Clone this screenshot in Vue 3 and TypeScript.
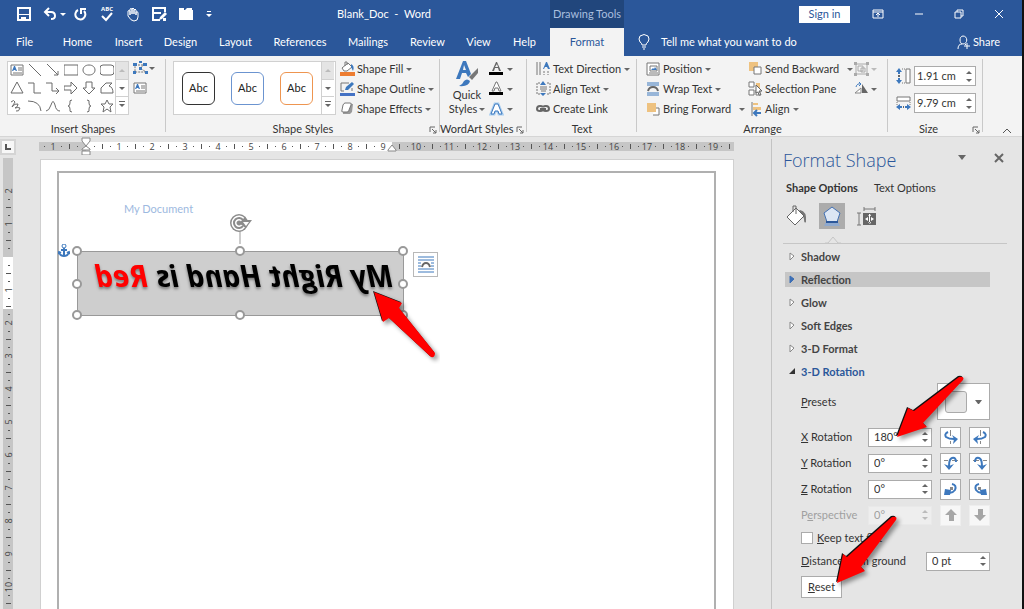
<script setup lang="ts">
import { ref } from 'vue'

const tabs = ['File', 'Home', 'Insert', 'Design', 'Layout', 'References', 'Mailings', 'Review', 'View', 'Help']

const shapeGlyphs: string[] = [
  'M1 1L13 13',
  'M1 1L12 12M12 8V12H8',
  'M0 2H14V12H0Z',
  'M7 2C15 2 15 12 7 12C-1 12 -1 2 7 2Z',
  'M3 2H11Q14 2 14 5V9Q14 12 11 12H3Q0 12 0 9V5Q0 2 3 2Z',
  'M7 1L13 12H1Z',
  'M0 2H6V12H13',
  'M0 2H6V10H13M10 7L13 10L10 13',
  'M0 5H7V1L13 7L7 13V9H0Z',
  'M4 1H10V7H13L7 13L1 7H4Z',
  'M1 12V7L6 2H12L9 5Q13 6 13 12Z',
  'M1 3Q4 0 5 3Q3 6 2 8Q5 4 8 5Q8 8 5 9Q8 8 10 9Q9 13 6 12',
  'M0 2Q12 2 13 12',
  'M0 12Q3 12 5 6Q7 -1 9 6Q10 12 14 12',
  'M8 1Q5 1 6 4Q6 7 4 7Q6 7 6 10Q5 13 8 13',
  'M5 1Q8 1 7 4Q7 7 9 7Q7 7 7 10Q8 13 5 13',
  'M7 1L9 5H13L10 8L11 13L7 10L3 13L4 8L1 5H5Z',
]

const swatches = ['black', 'blue', 'orange']

const horizontalMarks = Array.from({ length: 21 }, (_, i) => i - 1)
const verticalMarks = Array.from({ length: 13 }, (_, i) => i - 2)

const sections = ['Shadow', 'Reflection', 'Glow', 'Soft Edges', '3-D Format']

interface RotationIcon {
  label: string
  guide: string
  curve: string
  head: string
}

interface RotationRow {
  key: string
  accessKey: string
  before: string
  after: string
  value: string
  disabled: boolean
  icons: RotationIcon[]
}

const rotations = ref<RotationRow[]>([
  {
    key: 'x', accessKey: 'X', before: '', after: ' Rotation', value: '180°', disabled: false,
    icons: [
      { label: 'Left', guide: 'M6 0H7V6H6ZM6 11H7V14H6Z', curve: 'M4 2Q0 4 2 7Q5 9 10 9', head: 'M8 5L14 9L9 14L10 9Z' },
      { label: 'Right', guide: 'M7 0H8V6H7ZM7 11H8V14H7Z', curve: 'M10 2Q14 4 12 7Q9 9 4 9', head: 'M6 5L0 9L5 14L4 9Z' },
    ],
  },
  {
    key: 'y', accessKey: 'Y', before: '', after: ' Rotation', value: '0°', disabled: false,
    icons: [
      { label: 'Up', guide: 'M0 4H4V5H0ZM8 4H14V5H8Z', curve: 'M12 6Q12 1 8 2Q5 3 5 10', head: 'M0 8L5 14L10 8L5 10Z' },
      { label: 'Down', guide: 'M10 4H14V5H10ZM0 4H6V5H0Z', curve: 'M2 6Q2 1 6 2Q9 3 9 10', head: 'M4 8L9 14L14 8L9 10Z' },
    ],
  },
  {
    key: 'z', accessKey: 'Z', before: '', after: ' Rotation', value: '0°', disabled: false,
    icons: [
      { label: 'Counter-clockwise', guide: 'M6 5H9V8H6Z', curve: 'M8 2Q13 3 11 8Q8 12 3 10', head: 'M1 7L7 8L6 13L0 13Z' },
      { label: 'Clockwise', guide: 'M5 5H8V8H5Z', curve: 'M6 2Q1 3 3 8Q6 12 11 10', head: 'M13 7L7 8L8 13L14 13Z' },
    ],
  },
  {
    key: 'p', accessKey: 'e', before: 'P', after: 'rspective', value: '0°', disabled: true,
    icons: [
      { label: 'Narrow', guide: 'M7 1L13 7H10V13H5V7H1Z', curve: '', head: '' },
      { label: 'Widen', guide: 'M7 13L13 7H10V1H5V7H1Z', curve: '', head: '' },
    ],
  },
])

const height = ref('1.91 cm')
const width = ref('9.79 cm')
const distance = ref('0 pt')
const keepFlat = ref(false)
</script>

<template>
  <div class="window">
    <header class="titlebar">
      <div class="quick">
        <button aria-label="Save"><svg width="14" height="14" viewBox="0 0 14 14"><path d="M1 1H13V13H1Z" fill="none" stroke="#fff" stroke-width="2" /><path d="M2 7H12V8H2ZM4 10H9V14H4Z" fill="#fff" /></svg></button>
        <button aria-label="Undo" class="undo"><svg width="14" height="14" viewBox="0 0 14 14"><path d="M6 1L2 5L6 9M2 5H8Q12 5 12 9Q12 12 8 12" fill="none" stroke="#fff" stroke-width="2" /></svg><i class="caret light" /></button>
        <button aria-label="Redo"><svg width="14" height="14" viewBox="0 0 14 14"><path d="M4 3A5 5 0 1 0 10 4M7 7V2H12" fill="none" stroke="#fff" stroke-width="2" /></svg></button>
        <button aria-label="Spelling"><svg width="14" height="16" viewBox="0 0 14 16"><text x="7" y="5" text-anchor="middle" class="abc">ABC</text><path d="M2 10L6 14L12 7" fill="none" stroke="#fff" stroke-width="2" /></svg></button>
        <button aria-label="Touch mode"><svg width="14" height="15" viewBox="0 0 14 15"><path d="M2 9V4Q3 3 4 4V8V2Q5 1 6 2V7V2Q7 0 8 2V7V3Q9 1 10 3V8V5Q12 4 12 6V10Q12 14 8 14Q5 14 2 9" fill="none" stroke="#fff" /></svg></button>
        <button aria-label="Save as"><svg width="15" height="14" viewBox="0 0 15 14"><path d="M8 13H1V1H13V5M2 6H9" fill="none" stroke="#fff" stroke-width="2" /><path d="M7 13L8 10L13 5L15 7L10 12ZM11 11H14V14H11Z" fill="#fff" /></svg></button>
        <button aria-label="Open"><svg width="15" height="14" viewBox="0 0 15 14"><path d="M0 1H5V3H6L8 1H13V3H14V13H0Z" fill="#fff" /></svg></button>
        <button aria-label="Customize toolbar"><svg width="6" height="8" viewBox="0 0 6 8"><path d="M1 1H5V2H1ZM0 4H6L3 7Z" fill="#fff" /></svg></button>
      </div>
      <h1>Blank_Doc&nbsp; -&nbsp; Word</h1>
      <span class="context">Drawing Tools</span>
      <div class="window-actions">
        <button class="signin">Sign in</button>
        <button aria-label="Ribbon display options"><svg width="12" height="10" viewBox="0 0 12 10"><path d="M1 1H11V9H1ZM1 3H11M6 8V4M4 6L6 4L8 6" fill="none" stroke="#fff" /></svg></button>
        <button aria-label="Minimize"><svg width="10" height="10" viewBox="0 0 10 10"><path d="M1 5H9" stroke="#fff" /></svg></button>
        <button aria-label="Restore"><svg width="10" height="10" viewBox="0 0 10 10"><path d="M1 3H7V9H1ZM3 3V1H9V7H7" fill="none" stroke="#fff" /></svg></button>
        <button aria-label="Close"><svg width="10" height="10" viewBox="0 0 10 10"><path d="M1 1L9 9M9 1L1 9" stroke="#fff" /></svg></button>
      </div>
    </header>

    <nav class="tabs">
      <button v-for="tab in tabs" :key="tab">{{ tab }}</button>
      <button class="active">Format</button>
      <button class="tell"><svg width="12" height="16" viewBox="0 0 12 16"><path d="M4 11Q4 9 2 8Q0 5 2 2Q6 -1 10 2Q12 5 10 8Q8 9 8 11ZM4 13H8M5 15H7" fill="none" stroke="#fff" /></svg>Tell me what you want to do</button>
      <button class="share"><svg width="14" height="14" viewBox="0 0 14 14"><path d="M6 1C11 1 11 9 6 9C2 9 2 1 6 1ZM1 14Q1 9 5 9M8 9L9 10M10 8V14M7 11H13" fill="none" stroke="#fff" /></svg>Share</button>
    </nav>

    <section class="ribbon" aria-label="Format">
      <div class="group insert">
        <div class="body">
          <div class="gallery">
            <div class="shapes">
              <button aria-label="Text box"><svg width="14" height="14" viewBox="0 0 14 14"><path d="M1 2H13V12H1ZM8 5H12M8 7H12M3 10H12" fill="#fff" stroke="#777" /><path d="M2 8L4 3H5L7 8H6L5 7H4L3 8Z" fill="#3d78bd" /></svg></button>
              <button v-for="(glyph, i) in shapeGlyphs" :key="i" :aria-label="`Shape ${i + 1}`"><svg width="14" height="14" viewBox="0 0 14 14"><path :d="glyph" fill="none" stroke="#6b6b6b" /></svg></button>
            </div>
            <div class="scroller"><button class="off" aria-label="Previous"><i class="caret up" /></button><button aria-label="Next"><i class="caret" /></button><button aria-label="More"><i class="caret more" /></button></div>
          </div>
          <div class="edit-tools">
            <button aria-label="Edit shape"><svg width="16" height="14" viewBox="0 0 16 14"><path d="M2 4H11L7 7L13 11H2Z" fill="none" stroke="#777" stroke-dasharray="2 1" /><path d="M0 2H4V5H0ZM10 2H14V5H10ZM6 6H9V9H6ZM12 10H15V13H12ZM0 10H3V13H0ZM6 0H9V2H6Z" fill="#3d78bd" /></svg><i class="caret" /></button>
            <button aria-label="Draw text box"><svg width="14" height="12" viewBox="0 0 14 12"><path d="M1 1H13V11H1ZM8 4H12M8 6H12M3 9H12" fill="#fff" stroke="#777" /><path d="M2 7L4 2H5L7 7H6L5 6H4L3 7Z" fill="#3d78bd" /></svg></button>
          </div>
        </div>
        <h2>Insert Shapes</h2>
      </div>

      <div class="group styles">
        <div class="body">
          <div class="gallery swatches">
            <button v-for="s in swatches" :key="s" class="swatch" :class="s">Abc</button>
            <div class="scroller"><button class="off" aria-label="Previous"><i class="caret up" /></button><button aria-label="Next"><i class="caret" /></button><button aria-label="More"><i class="caret more" /></button></div>
          </div>
          <div class="rows">
            <button><svg width="15" height="16" viewBox="0 0 15 16"><path d="M2 7L8 2L12 6L7 10H4ZM5 5V1H7V4" fill="#fff" stroke="#777" /><path d="M11 3Q15 5 13 10Q12 8 11 6Z" fill="#3d78bd" /><path d="M0 11H15V15H0Z" fill="#ed7d31" /></svg>Shape Fill<i class="caret" /></button>
            <button><svg width="15" height="16" viewBox="0 0 15 16"><path d="M9 2H1V10H4M12 7V10" fill="none" stroke="#777" /><path d="M5 9L6 6L12 1L14 3L8 9Z" fill="#3d78bd" /><path d="M0 12H15V15H0Z" fill="#4472c4" /></svg>Shape Outline<i class="caret" /></button>
            <button><svg width="15" height="16" viewBox="0 0 15 16"><path d="M3 11L6 3H13L12 11L10 13H3Z" fill="#999" /><path d="M5 2H10Q12 2 11 4L9 9Q9 11 7 11H3Q1 11 2 9L3 4Q4 2 5 2Z" fill="#fff" stroke="#777" /></svg>Shape Effects<i class="caret" /></button>
          </div>
        </div>
        <h2>Shape Styles</h2>
        <button class="launcher" aria-label="Shape style settings"><svg width="8" height="8" viewBox="0 0 8 8"><path d="M1 6V1H6M3 3L7 7M7 4V7H4" fill="none" stroke="#666" /></svg></button>
      </div>

      <div class="group wordart">
        <div class="body">
          <button class="quick-styles">
            <svg width="26" height="28" viewBox="0 0 26 28"><path d="M2 19L9 1H12L17 14L14 17L12 13H8L6 19ZM9 10H12L10 5Z" fill="#3d78bd" fill-rule="evenodd" /><path d="M15 17L24 8V13L18 20Z" fill="#777" /><path d="M5 26Q9 24 10 21Q13 18 16 21Q15 27 5 26Z" fill="#3d78bd" /></svg>
            <span>Quick</span><span>Styles<i class="caret" /></span>
          </button>
          <div class="rows">
            <button aria-label="Text fill"><svg width="15" height="16" viewBox="0 0 15 16"><path d="M3 10L7 1H8L12 10H10L9 7H6L5 10ZM6 6H9L8 3Z" fill="#666" fill-rule="evenodd" /><path d="M0 11H14V14H0Z" fill="#000" /></svg><i class="caret" /></button>
            <button aria-label="Text outline"><svg width="15" height="16" viewBox="0 0 15 16"><path d="M3 10L7 1H8L12 10H10L9 7H6L5 10Z" fill="#fff" stroke="#777" /><path d="M0 11H14V14H0Z" fill="#000" /></svg><i class="caret" /></button>
            <button aria-label="Text effects"><svg width="15" height="16" viewBox="0 0 15 16"><path d="M2 13L6 3H9L13 13H10L9 10H6L5 13Z" fill="none" stroke="#a8cdf0" stroke-width="3" /><path d="M2 13L6 3H9L13 13H10L9 10H6L5 13Z" fill="#fff" stroke="#3d78bd" /></svg><i class="caret" /></button>
          </div>
        </div>
        <h2>WordArt Styles</h2>
        <button class="launcher" aria-label="WordArt settings"><svg width="8" height="8" viewBox="0 0 8 8"><path d="M1 6V1H6M3 3L7 7M7 4V7H4" fill="none" stroke="#666" /></svg></button>
      </div>

      <div class="group text">
        <div class="body">
          <div class="rows">
            <button><svg width="15" height="16" viewBox="0 0 15 16"><path d="M1 1V14M4 1V14" stroke="#777" /><path d="M8 10V14M12 10V14" stroke="#777" stroke-dasharray="2 1" /><path d="M7 8L10 1H11L14 8H12L11 6H9L8 8Z" fill="#3d78bd" /></svg>Text Direction<i class="caret" /></button>
            <button><svg width="15" height="16" viewBox="0 0 15 16"><path d="M4 2H1V13H4M11 2H14V13H11" fill="none" stroke="#777" stroke-dasharray="2 1" /><path d="M4 6H11M4 8H11M5 10H10" stroke="#777" /><path d="M7 0L10 4H4ZM7 15L10 12H4Z" fill="#3d78bd" /></svg>Align Text<i class="caret" /></button>
            <button><svg width="15" height="16" viewBox="0 0 15 16"><path d="M7 6Q6 5 4 5Q1 5 1 8Q1 10 4 10Q6 10 7 9M7 6Q8 5 10 5Q13 5 13 8Q13 10 10 10Q8 10 7 9M4 8H10" fill="none" stroke="#666" stroke-width="2" /></svg>Create Link</button>
          </div>
        </div>
        <h2>Text</h2>
      </div>

      <div class="group arrange">
        <div class="body">
          <div class="rows first">
            <button><svg width="15" height="16" viewBox="0 0 15 16"><path d="M1 2H13V14H1ZM4 5H11V10H4ZM3 12H12" fill="#fff" stroke="#777" /><path d="M5 9L7 7L8 8L9 6L11 9Z" fill="#3d78bd" /></svg>Position<i class="caret" /></button>
            <button><svg width="15" height="16" viewBox="0 0 15 16"><path d="M1 2H13M1 4H13M1 12H13M1 14H13" stroke="#3d78bd" /><path d="M2 10Q3 6 7 6Q11 6 12 10" fill="none" stroke="#666" stroke-width="2" /></svg>Wrap Text<i class="caret" /></button>
            <button><svg width="15" height="16" viewBox="0 0 15 16"><path d="M8 7H13V14H7" fill="#fff" stroke="#777" /><path d="M1 2H10V11H1Z" fill="#eec280" /></svg>Bring Forward<i class="caret wide" /></button>
          </div>
          <div class="rows second">
            <button><svg width="15" height="16" viewBox="0 0 15 16"><path d="M1 1H10V10H1Z" fill="#eec280" /><path d="M6 6H13V13H6Z" fill="#fff" stroke="#777" /></svg>Send Backward<i class="caret wide" /></button>
            <button><svg width="15" height="16" viewBox="0 0 15 16"><path d="M1 1H6V6H1ZM1 9H6V14H1ZM8 9H12V14H8Z" fill="#fff" stroke="#777" /><path d="M8 2H12V7H8Z" fill="#eec280" /><path d="M8 4L14 10H11L13 14L11 14L10 11L8 12Z" fill="#fff" stroke="#666" /></svg>Selection Pane</button>
            <button><svg width="15" height="16" viewBox="0 0 15 16"><path d="M4 1V15" stroke="#777" /><path d="M5 2H10V4H5ZM5 6H13V9H5Z" fill="#eec280" /><path d="M13 12H6M9 9L6 12L9 15" fill="none" stroke="#3d78bd" stroke-width="2" /></svg>Align<i class="caret" /></button>
          </div>
          <div class="rows third">
            <button disabled aria-label="Group"><svg width="15" height="16" viewBox="0 0 15 16"><path d="M2 3H13V13H2ZM4 5H9V10H4ZM7 7H11V11H7Z" fill="none" stroke="#aaa" /><path d="M0 1H3V4H0ZM12 1H15V4H12ZM0 12H3V15H0ZM12 12H15V15H12Z" fill="#aaa" /></svg><i class="caret pale" /></button>
            <button aria-label="Rotate"><svg width="15" height="16" viewBox="0 0 15 16"><path d="M8 3V12H14Z" fill="#666" /><path d="M7 7V12H1Z" fill="#fff" stroke="#888" /><path d="M2 6Q3 2 7 3M5 1L7 3L5 5" fill="none" stroke="#3d78bd" /></svg><i class="caret" /></button>
          </div>
        </div>
        <h2>Arrange</h2>
      </div>

      <div class="group size">
        <div class="body">
          <label><svg width="16" height="16" viewBox="0 0 16 16"><path d="M10 1H14V15H10Z" fill="#fff" stroke="#777" /><path d="M6 1H9M6 15H9" stroke="#777" stroke-dasharray="1 1" /><path d="M3 0L6 4H4V6H2V4H0ZM3 16L6 12H4V10H2V12H0Z" fill="#3d78bd" /><path d="M2 7H4V9H2Z" fill="#666" /></svg><span class="spin"><input v-model="height" aria-label="Shape height"><span><button aria-label="Increase height"><i class="caret up" /></button><button aria-label="Decrease height"><i class="caret" /></button></span></span></label>
          <label><svg width="16" height="16" viewBox="0 0 16 16"><path d="M1 2H14V6H1Z" fill="#fff" stroke="#777" /><path d="M1 7V10M14 7V10" stroke="#777" stroke-dasharray="1 1" /><path d="M0 12L4 9V11H6V13H4V15ZM15 12L11 9V11H9V13H11V15Z" fill="#3d78bd" /><path d="M7 11H8V13H7Z" fill="#666" /></svg><span class="spin"><input v-model="width" aria-label="Shape width"><span><button aria-label="Increase width"><i class="caret up" /></button><button aria-label="Decrease width"><i class="caret" /></button></span></span></label>
        </div>
        <h2>Size</h2>
        <button class="launcher" aria-label="Size settings"><svg width="8" height="8" viewBox="0 0 8 8"><path d="M1 6V1H6M3 3L7 7M7 4V7H4" fill="none" stroke="#666" /></svg></button>
      </div>
      <button class="collapse" aria-label="Collapse ribbon"><svg width="10" height="6" viewBox="0 0 10 6"><path d="M1 5L5 1L9 5" fill="none" stroke="#555" /></svg></button>
    </section>

    <main class="workspace">
      <div class="editor">
        <button class="tab-stop" aria-label="Tab stop"><svg width="6" height="6" viewBox="0 0 6 6"><path d="M1 0V5H6" fill="none" stroke="#555" stroke-width="2" /></svg></button>
        <div class="ruler-top">
          <svg width="100%" height="18">
            <rect y="5" width="100%" height="9" fill="#c6c6c6" />
            <rect x="47" y="5" width="306" height="9" fill="#fff" />
            <g v-for="n in horizontalMarks" :key="n" :transform="`translate(${47 + 33 * n} 0)`">
              <text v-if="n !== 0" y="13" text-anchor="middle" class="mark">{{ Math.abs(n) }}</text>
              <path v-if="n < 19" d="M8 9H9V10H8ZM16 7H17V12H16ZM24 9H25V10H24Z" fill="#555" />
            </g>
            <path d="M5 9H6V10H5ZM682 9H683V10H682ZM690 7H691V12H690Z" fill="#555" />
            <path d="M43 1H51V4L47 9L43 4ZM47 9L51 12V13H43V12ZM43 14H51V18H43ZM353 8L357 13V14H349V13Z" fill="#fff" stroke="#888" />
          </svg>
        </div>
        <div class="ruler-side">
          <svg width="16" height="460">
            <rect x="3" width="10" height="460" fill="#c6c6c6" />
            <rect x="3" y="99" width="10" height="52" fill="#fff" />
            <g v-for="n in verticalMarks" :key="n" :transform="`translate(0 ${99 + 33 * n})`">
              <text v-if="n !== 0" transform="translate(12 0) rotate(-90)" text-anchor="middle" class="mark">{{ Math.abs(n) }}</text>
              <path d="M8 8H10V9H8ZM6 16H11V17H6ZM8 24H10V25H8Z" fill="#555" />
            </g>
          </svg>
        </div>
        <article class="page">
          <div class="frame">
            <p class="heading">My Document</p>
            <svg class="anchor" width="12" height="14" viewBox="0 0 12 14"><path d="M6 4V12M3 6H9M1 8Q2 12 6 12Q10 12 11 8M0 10L1 8L3 9M12 10L11 8L9 9" fill="none" stroke="#3d78bd" stroke-width="2" /><circle cx="6" cy="2" r="2" fill="none" stroke="#3d78bd" /></svg>
            <div class="shape">
              <p>My Right Hand is <em>Red</em></p>
              <svg class="rotate" width="24" height="32" viewBox="0 0 24 32"><path d="M11 19V32" stroke="#999" /><circle cx="10" cy="11" r="9" fill="#8c8c8c" /><path d="M14 8A5 5 0 1 0 14 14" fill="none" stroke="#fff" stroke-width="5" /><path d="M14 8A5 5 0 1 0 14 14" fill="none" stroke="#8c8c8c" stroke-width="2" /><path d="M13 8L11 11L17 16L23 8H18L16 5Z" fill="#8c8c8c" /><path d="M14 10H20L17 14Z" fill="#fff" /></svg>
              <i v-for="h in ['nw', 'n', 'ne', 'w', 'e', 'sw', 's', 'se']" :key="h" class="handle" :class="h" />
            </div>
            <button class="layout-options" aria-label="Layout options"><svg width="18" height="18" viewBox="0 0 18 18"><path d="M1 1H17M1 4H17M1 7H4M14 7H17M1 10H4M14 10H17M1 13H17M1 16H17" stroke="#3d78bd" /><path d="M5 11Q6 7 9 7Q12 7 13 11" fill="none" stroke="#666" stroke-width="2" /></svg></button>
          </div>
        </article>
      </div>

      <aside class="pane">
        <header>
          <h2>Format Shape</h2>
          <button aria-label="Pane options"><svg width="8" height="5" viewBox="0 0 8 5"><path d="M0 0H8L4 5Z" fill="#666" /></svg></button>
          <button aria-label="Close pane"><svg width="10" height="10" viewBox="0 0 10 10"><path d="M1 1L9 9M9 1L1 9" stroke="#666" stroke-width="2" /></svg></button>
        </header>
        <div class="options"><button class="on">Shape Options</button><button>Text Options</button></div>
        <div class="modes">
          <button aria-label="Fill and line"><svg width="22" height="22" viewBox="0 0 22 22"><path d="M14 5Q21 6 20 17Q18 19 18 14Q17 9 12 7Z" fill="#777" /><path d="M1 12L10 3L18 11L9 20Z" fill="#fff" stroke="#666" /><path d="M7 7V1H10V9" fill="none" stroke="#666" /></svg></button>
          <button class="on" aria-label="Effects"><svg width="20" height="22" viewBox="0 0 20 22"><path d="M4 17H16L18 21H2Z" fill="#8ea9cf" /><path d="M10 2L18 8L15 17H5L2 8Z" fill="#dce6f4" stroke="#4472b4" stroke-width="1" /><path d="M4 17H16" stroke="#2b579a" stroke-width="2" /></svg></button>
          <button aria-label="Layout and properties"><svg width="20" height="20" viewBox="0 0 20 20"><path d="M6 7H19V19H6Z" fill="#666" /><path d="M7 1V5M18 1V5M7 3H18M0 7H4M0 19H4M2 7V19" fill="none" stroke="#777" /><path d="M8 13L11 11V15ZM17 13L14 11V15ZM12 8H13V18H12ZM11 10L13 8L14 10ZM11 16L13 18L14 16Z" fill="#fff" /></svg></button>
        </div>
        <svg class="notch" width="16" height="8" viewBox="0 0 16 8"><path d="M0 7H3L8 1L13 7H16" fill="#e5e5e5" stroke="#c6c6c6" /></svg>
        <ul>
          <li v-for="s in sections" :key="s"><button :class="{ hot: s === 'Reflection' }"><svg width="6" height="9" viewBox="0 0 6 9"><path d="M1 1L5 4L1 8Z" /></svg>{{ s }}</button></li>
          <li><button class="open"><svg width="6" height="9" viewBox="0 0 6 9"><path d="M6 1V7H0Z" /></svg>3-D Rotation</button></li>
        </ul>
        <form class="rotation" @submit.prevent>
          <div class="field presets"><span><u>P</u>resets</span><button class="preset" aria-label="Presets"><i class="tile" /><svg width="7" height="4" viewBox="0 0 7 4"><path d="M0 0H7L4 4H3Z" fill="#666" /></svg></button></div>
          <div v-for="r in rotations" :key="r.key" class="field" :class="{ disabled: r.disabled }">
            <label :for="`rot-${r.key}`">{{ r.before }}<u>{{ r.accessKey }}</u>{{ r.after }}</label>
            <span class="spin"><input :id="`rot-${r.key}`" v-model="r.value" :disabled="r.disabled"><span><button type="button" :disabled="r.disabled" aria-label="Increase"><i class="caret up" /></button><button type="button" :disabled="r.disabled" aria-label="Decrease"><i class="caret" /></button></span></span>
            <button v-for="icon in r.icons" :key="icon.label" type="button" class="square" :disabled="r.disabled" :aria-label="icon.label"><svg width="14" height="14" viewBox="0 0 14 14"><path :d="icon.guide" :fill="r.disabled ? '#a6a6a6' : '#888'" /><path v-if="icon.curve" :d="icon.curve" fill="none" stroke="#3d78bd" stroke-width="2" /><path v-if="icon.head" :d="icon.head" fill="#3d78bd" /></svg></button>
          </div>
          <label class="flat"><input v-model="keepFlat" type="checkbox"><span><u>K</u>eep text flat</span></label>
          <div class="field distance"><label for="distance"><u>D</u>istance from ground</label><span class="spin"><input id="distance" v-model="distance"><span><button type="button" aria-label="Increase"><i class="caret up" /></button><button type="button" aria-label="Decrease"><i class="caret" /></button></span></span></div>
          <button type="button" class="reset"><u>R</u>eset</button>
        </form>
        <svg class="pointers" width="140" height="240" viewBox="0 0 140 240"><g class="pointer"><path d="M65 66L76 37L82 40L127 6Q133 5 131 9L91 52L95 56Z" /><path d="M5 212L11 183L15 186L60 146Q66 145 64 149L29 196L33 200Z" /></g></svg>
      </aside>
      <svg class="callout" width="70" height="76" viewBox="0 0 70 76"><g class="pointer"><path d="M4 4L32 15L29 20L65 65Q65 70 61 69L19 30L13 34Z" /></g></svg>
    </main>
  </div>
</template>

<style>
html, body { margin: 0; background: #e5e5e5; }
</style>

<style scoped>
.window { height: 100vh; box-sizing: border-box; overflow: hidden; display: flex; flex-direction: column; border-right: 2px solid #111; background: #e5e5e5; color: #333; font: 11px/16px Lato, "Open Sans", sans-serif; }
.window * { box-sizing: border-box; }
button { padding: 0; border: 0; background: none; color: inherit; font: inherit; display: flex; align-items: center; justify-content: center; white-space: nowrap; }
input { font: inherit; color: inherit; border: 0; background: none; padding: 0; margin: 0; min-width: 0; }
h1, h2, p, ul { margin: 0; padding: 0; font: inherit; list-style: none; }
svg { display: block; flex: none; }
.caret { display: block; flex: none; width: 0; height: 0; border: 3px solid transparent; border-top: 3px solid #666; border-bottom: 0; margin-left: 3px; }
.caret.light { border-top-color: #fff; }
.caret.pale { border-top-color: #bbb; }
.caret.up { border-top: 0; border-bottom: 3px solid #666; }

.titlebar { flex: none; height: 28px; display: grid; grid-template-columns: 218px 332px 74px 1fr; align-items: center; background: #2b579a; color: #fff; }
.quick { display: flex; align-items: center; padding-left: 17px; gap: 12px; }
.quick .undo { margin-right: -4px; }
.abc { font: bold 6px "Open Sans", sans-serif; fill: #fff; }
.titlebar h1 { text-align: center; }
.context { height: 28px; line-height: 28px; text-align: center; background: #21467c; color: #a9bfdf; }
.window-actions { display: flex; align-items: center; justify-content: flex-end; padding-right: 18px; gap: 30px; }
.signin { width: 51px; height: 17px; margin-right: -8px; background: #fff; color: #2b579a; }

.tabs { flex: none; height: 28px; display: grid; grid-template-columns: 49px 57px 45px 59px 51px 78px 58px 61px 41px 51px 74px 1fr 65px; background: #2b579a; color: #fff; }
.tabs .active { background: #f3f3f3; color: #2b579a; }
.tabs .tell { justify-content: flex-start; padding-left: 14px; gap: 11px; }
.tabs .share { justify-content: flex-start; gap: 2px; }

.ribbon { flex: none; height: 81px; display: flex; background: #f3f3f3; border-bottom: 1px solid #d5d5d5; }
.group { position: relative; flex: none; display: flex; flex-direction: column; justify-content: space-between; padding-top: 3px; }
.group::after { content: ""; position: absolute; right: 0; top: 3px; bottom: 4px; width: 1px; background: #c9c9c9; }
.group h2 { text-align: center; line-height: 14px; white-space: nowrap; }
.body { display: flex; }
.insert { width: 166px; }
.styles { width: 274px; }
.wordart { width: 87px; }
.text { width: 110px; }
.arrange { width: 251px; }
.size { width: 95px; }
.insert .body { padding: 2px 0 0 7px; }
.gallery { display: flex; height: 54px; background: #fff; border: 1px solid #d0d0d0; }
.shapes { display: grid; grid-template-columns: repeat(6, 18px); grid-template-rows: repeat(3, 18px); width: 107px; align-content: center; }
.scroller { width: 13px; flex: none; display: flex; flex-direction: column; border-left: 1px solid #d0d0d0; }
.scroller button { flex: 1; width: 100%; border-bottom: 1px solid #d0d0d0; }
.scroller button:last-child { border-bottom: 0; }
.scroller .caret { margin: 0; }
.scroller .off { background: #e4e4e4; }
.scroller .off .caret { border-bottom-color: #bbb; }
.caret.more { position: relative; }
.caret.more::before { content: ""; position: absolute; left: -3px; top: -6px; width: 6px; height: 1px; background: #666; }
.edit-tools { display: flex; flex-direction: column; align-items: flex-start; gap: 7px; padding-left: 4px; }
.edit-tools .caret { margin-left: 0; }
.styles .body { padding-left: 7px; }
.swatches { width: 163px; margin-top: 2px; padding-left: 8px; gap: 16px; align-items: center; }
.swatches .scroller { height: 100%; margin-left: -8px; }
.swatch { width: 33px; height: 33px; flex: none; border: 1px solid #333; border-radius: 6px; background: #fff; color: #222; }
.swatch.blue { border-color: #6b94d0; }
.swatch.orange { border-color: #ee9550; }
.rows { display: flex; flex-direction: column; align-items: flex-start; padding-left: 4px; }
.rows button { height: 20px; }
.rows svg { margin-right: 2px; }
.launcher { position: absolute; right: 3px; bottom: 2px; width: 8px; height: 8px; }
.quick-styles { flex-direction: column; justify-content: flex-start; width: 36px; margin-left: 9px; padding-top: 1px; line-height: 14px; }
.quick-styles span { display: flex; align-items: center; }
.quick-styles .caret { margin-left: 2px; }
.wordart .rows .caret { margin-left: 1px; }
.wordart h2 { padding-right: 14px; }
.text .rows, .arrange .first { padding-left: 9px; }
.first { width: 111px; }
.rows.second { padding: 0; width: 106px; }
.rows.third { padding: 0; }
.third .caret { margin-left: 0; }
.rows .caret.wide { margin-left: 8px; }
.size .body { flex-direction: column; gap: 7px; padding: 7px 0 0 8px; }
.size label { display: flex; align-items: center; gap: 2px; }
.size h2 { padding-right: 14px; }
.spin { display: flex; align-items: stretch; background: #fff; border: 1px solid #ababab; }
.spin input { flex: 1; width: 10px; padding-left: 2px; }
.spin > span { display: flex; flex-direction: column; width: 13px; padding: 1px 0; }
.spin > span button { flex: 1; }
.spin .caret { margin: 0; }
.size .spin { width: 62px; height: 20px; }
.collapse { margin: auto auto 2px; padding-left: 8px; }

.workspace { position: relative; flex: 1; min-height: 0; display: grid; grid-template-columns: 1fr 251px; }
.editor { min-height: 0; min-width: 0; overflow: hidden; display: grid; grid-template-columns: 39px 1fr; grid-template-rows: 20px 1fr; padding-right: 37px; }
.tab-stop { width: 16px; height: 16px; margin-top: 2px; background: #f7f7f7; border: 2px solid #d4d4d4; }
.ruler-top { overflow: hidden; }
.ruler-side { min-height: 0; overflow: hidden; padding-top: 1px; }
.mark { font: 9px "Open Sans", "Noto Sans", sans-serif; fill: #444; }
.page { margin: 2px 0 0 1px; padding: 11px 17px 0 16px; background: #fff; border: 1px solid #d0d0d0; border-bottom: 0; display: flex; }
.frame { position: relative; flex: 1; border: 2px solid #b0b0b0; border-bottom: 0; }
.heading { padding: 28px 0 0 65px; color: #9db9e0; }
.anchor { position: absolute; left: -1px; top: 71px; }
.shape { position: absolute; left: 18px; top: 78px; width: 327px; height: 65px; background: #cecece; border: 1px solid #999; }
.shape p { transform: scaleX(-1); text-align: left; padding: 6px 0 0 10px; font: italic bold 30px/36px "Open Sans", "Noto Sans", sans-serif; color: #000; text-shadow: 0 2px 3px #777; white-space: nowrap; }
.shape em { color: #f00; }
.handle { position: absolute; width: 10px; height: 10px; border: 2px solid #999; border-radius: 50%; background: #fff; left: 157px; top: 27px; }
.handle.nw, .handle.w, .handle.sw { left: -6px; }
.handle.ne, .handle.e, .handle.se { left: 320px; }
.handle.nw, .handle.n, .handle.ne { top: -6px; }
.handle.sw, .handle.s, .handle.se { top: 58px; }
.rotate { position: absolute; left: 151px; top: -40px; }
.layout-options { position: absolute; left: 354px; top: 79px; width: 25px; height: 25px; background: #fff; border: 1px solid #b8b8b8; }

.pane { position: relative; border-left: 1px solid #c3c3c3; padding: 0 15px 0 11px; margin-top: 2px; }
.pane header { display: flex; align-items: flex-start; padding: 7px 3px 0 0; }
.pane header h2 { flex: 1; font: 300 18px/28px "Open Sans", sans-serif; color: #2b579a; }
.pane header button { width: 10px; height: 24px; margin-left: 27px; }
.pane header button:first-of-type { height: 22px; }
.options { display: flex; padding-left: 3px; margin-top: 6px; gap: 16px; }
.options .on { font-weight: 700; }
.modes { display: flex; padding: 7px 0 0 1px; height: 48px; align-items: flex-start; border-bottom: 1px solid #c6c6c6; }
.modes button { width: 26px; height: 26px; margin-right: 9px; }
.modes .on { background: #acacac; }
.notch { position: absolute; left: 53px; top: 97px; }
.pane ul { padding: 1px 17px 0 2px; }
.pane li { height: 23px; display: flex; align-items: center; }
.pane li button { width: 100%; height: 15px; justify-content: flex-start; gap: 6px; padding-left: 4px; font-weight: 700; color: #444; }
.pane li path { fill: #fff; stroke: #888; }
.pane li .hot { background: #c6c6c6; }
.pane li .hot path { fill: #3d6fb5; stroke: #3d6fb5; }
.pane li .open { color: #2b579a; }
.pane li .open path { fill: #333; stroke: none; }
.rotation { padding: 0 17px 0 18px; }
.field { display: grid; grid-template-columns: 1fr 64px 21px 21px; column-gap: 8px; align-items: center; height: 26px; }
.field label { white-space: nowrap; }
.field .spin { height: 19px; line-height: 14px; }
.field .spin input { padding-left: 5px; }
.field.presets { grid-template-columns: 1fr 53px; height: 37px; margin-bottom: 4px; }
.preset { height: 37px; background: #fff; border: 1px solid #ababab; gap: 8px; }
.tile { width: 22px; height: 22px; border: 1px solid #aaa; border-radius: 3px; background: #e5e5e5; }
.square { width: 21px; height: 21px; background: #fff; border: 1px solid #ababab; }
.disabled { color: #a0a0a0; }
.disabled .spin { background: #eee; border-color: #e9e9e9; }
.disabled .square { border-color: #eee; background: #f7f7f7; }
.disabled .caret { border-top-color: #bbb; }
.disabled .caret.up { border-bottom-color: #bbb; }
.flat { display: flex; align-items: center; height: 20px; gap: 4px; }
.flat input { appearance: none; width: 12px; height: 12px; background: #fff; border: 1px solid #ababab; }
.field.distance { grid-template-columns: 1fr 64px; }
.reset { width: 41px; height: 22px; margin-top: 2px; background: #fff; border: 1px solid #ababab; }
.pointers { position: absolute; left: 60px; top: 232px; pointer-events: none; }
.callout { position: absolute; left: 370px; top: 151px; pointer-events: none; }
.pointer { fill: #f00; filter: drop-shadow(-1px -1px 0 #111) drop-shadow(3px 3px 2px #0006); }
</style>
